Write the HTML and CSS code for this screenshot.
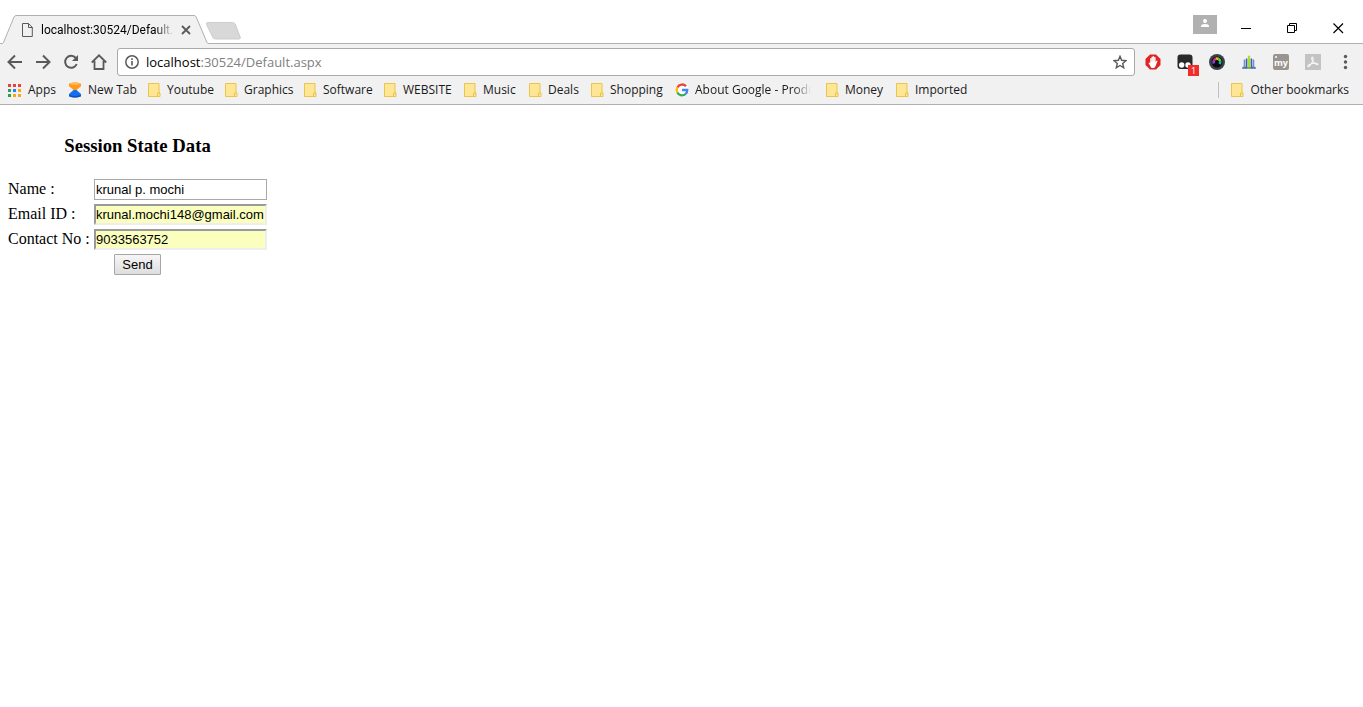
FILE: index.html
```html
<!DOCTYPE html>
<html lang="en">
<head>
<meta charset="utf-8">
<title>localhost:30524/Default.aspx</title>
<link rel="stylesheet" href="styles.css">
</head>
<body>
<svg class="defs" width="0" height="0" aria-hidden="true">
  <symbol id="folder" viewBox="0 0 13 14"><path d="M.5 .5h10.500v9.500h1v3.500H.5z" fill="#ffe694" stroke="#e9c54b"/><path d="M9.500 13.500v-3.500h2.500" fill="none" stroke="#e9c54b"/></symbol>
</svg>
<header class="browser">
  <div class="tabstrip">
    <div class="tab">
      <svg class="tab-shape" width="210" height="29" viewBox="0 0 210 29"><path d="M0 28.500h2q1 0 1.500-1L14 2Q15 .5 16 .5h178q1.500 0 2.200 1.500L207 27.500q.5 1 1.500 1h1.500V29H0z" fill="#f1f1f1"/><path d="M0 28.500h2q1 0 1.500-1L14 2Q15 .5 16 .5h178q1.500 0 2.200 1.500L207 27.500q.5 1 1.500 1h1.500" fill="none" stroke="#b0b0b0"/></svg>
      <svg class="page-icon" width="11" height="14" viewBox="0 0 11 14" fill="none" stroke="#5a5a5a"><path d="M.5 .5h6l3.800 3.800v9.200H.5zM6.500 .5v4h4"/></svg>
      <span class="tab-title">localhost:30524/Default.aspx</span>
      <button class="plain tab-close" aria-label="Close tab"><svg width="10" height="10" viewBox="0 0 10 10" stroke="#5a5a5a" stroke-width="1.800"><path d="M1 1l8 8M9 1L1 9"/></svg></button>
    </div>
    <button class="plain new-tab" aria-label="New tab"><svg width="36" height="18" viewBox="0 0 36 18"><path d="M1.500 .5h25q2 0 2.700 1.500l5 13q.7 2-1.200 2H9.500q-2 0-2.700-1.500L.5 2.500Q0 .5 1.500 .5z" fill="#d8d8d8" stroke="#cdcdcd"/></svg></button>
    <div class="window-controls">
      <button class="plain profile" aria-label="Profile"><svg width="24" height="19" viewBox="0 0 24 19"><path d="M0 0h24v19H0z" fill="#b1b1b1"/><circle cx="12" cy="6" r="2" fill="#fff"/><path d="M8 12v-1q0-2 4-2t4 2v1z" fill="#fff"/></svg></button>
      <button class="plain control" aria-label="Minimize"><svg width="11" height="11" viewBox="0 0 11 11"><path d="M0 5h10v1H0z"/></svg></button>
      <button class="plain control" aria-label="Restore"><svg width="11" height="11" viewBox="0 0 11 11" fill="none" stroke="#000"><path d="M.5 2.500h7v7h-7zM2.500 2V.5h7v7H8"/></svg></button>
      <button class="plain control" aria-label="Close"><svg width="11" height="11" viewBox="0 0 11 11" stroke="#000" stroke-width="1.200"><path d="M.5 .5l9.500 9.500M10 .5L.5 10"/></svg></button>
    </div>
  </div>
  <div class="toolbar">
    <nav class="nav-buttons">
      <button class="plain" aria-label="Back"><svg width="16" height="16" viewBox="0 0 16 16" fill="none" stroke="#5a5a5a" stroke-width="2"><path d="M15 8H2M8 1.500L1.500 8 8 14.500"/></svg></button>
      <button class="plain" aria-label="Forward"><svg width="16" height="16" viewBox="0 0 16 16" fill="none" stroke="#5a5a5a" stroke-width="2"><path d="M1 8h13M8 1.500L14.500 8 8 14.500"/></svg></button>
      <button class="plain" aria-label="Reload"><svg width="16" height="16" viewBox="0 0 16 16"><path d="M12.800 4A6 6 0 1 0 13.700 10" fill="none" stroke="#5a5a5a" stroke-width="2"/><path d="M15 1v6H9z" fill="#5a5a5a"/></svg></button>
      <button class="plain" aria-label="Home"><svg width="16" height="16" viewBox="0 0 16 16" fill="none" stroke="#5a5a5a" stroke-width="1.800"><path d="M.8 8.500L8 1.300l7.200 7.200M3.500 7v8h9V7"/></svg></button>
    </nav>
    <div class="omnibox">
      <svg width="14" height="14" viewBox="0 0 14 14"><circle cx="7" cy="7" r="6.200" fill="none" stroke="#5a5a5a" stroke-width="1.500"/><path d="M6.200 6h1.600v4.500H6.200zM6.200 3.300h1.600v1.600H6.200z" fill="#5a5a5a"/></svg>
      <span class="url"><span class="host">localhost</span>:30524/Default.aspx</span>
      <button class="plain" aria-label="Bookmark this page"><svg width="14" height="14" viewBox="0 0 14 14" fill="none" stroke="#5a5a5a" stroke-width="1.400"><path d="M7 1.300l1.600 4 4.400.4-3.300 2.800 1 4.300L7 10.500l-3.700 2.300 1-4.300L1 5.700l4.400-.4z"/></svg></button>
    </div>
    <div class="extensions">
      <button class="plain" aria-label="Ad blocker"><svg width="16" height="16" viewBox="0 0 16 16"><path d="M5 .5h6L15.500 5v6L11 15.500H5L.5 11V5z" fill="#e02424"/><path d="M5.500 12.500L3.500 9q.5-1 1.700 0V4.500q.6-1 1.300 0V3q.6-1 1.300 0v-.5q.8-1 1.400 0V3.500q.8-1 1.400 0V8l1-1.500q1-.3.8.7l-1.900 5q-.6 1.800-2 1.800H7q-1 0-1.500-1.500z" fill="#fff"/><path d="M6.500 4v3.500M7.800 3.500v4M9.200 4v3.500" stroke="#eaa" stroke-width=".4"/></svg></button>
      <button class="plain badged" aria-label="Scripts, 1 active"><svg width="16" height="16" viewBox="0 0 16 16"><rect x=".5" y=".5" width="15" height="14.500" rx="3" fill="#292929"/><circle cx="4.700" cy="11" r="2.700" fill="#fff"/><circle cx="11" cy="11" r="2.700" fill="#fff"/></svg><span class="badge">1</span></button>
      <button class="plain" aria-label="Camera"><svg width="16" height="16" viewBox="0 0 16 16"><circle cx="8" cy="8" r="8" fill="#3d4147"/><circle cx="8" cy="8" r="5.500" fill="#0c0c10"/><g fill="none" stroke-width="2.600"><path d="M5 9.500A3.300 3.300 0 0 1 5.300 6" stroke="#8a3be0"/><path d="M5.300 6A3.300 3.300 0 0 1 7 4.800" stroke="#e8385a"/><path d="M7 4.800a3.300 3.300 0 0 1 2.500.2" stroke="#f0b92e"/><path d="M9.500 5a3.300 3.300 0 0 1 1.800 2.500" stroke="#55d63a"/><path d="M11.300 7.500A3.300 3.300 0 0 1 10.500 10" stroke="#20b9a4"/></g></svg></button>
      <button class="plain" aria-label="Traffic chart"><svg width="16" height="16" viewBox="0 0 16 16"><path d="M1 14.500l1.700-2.500V6q.8-1.500 1.600 0v8.500zM15 14.500l-1.700-2.500V6q-.8-1.500-1.600 0v8.500z" fill="#6f8fd8"/><path d="M3.800 14.500l1-2.500V5q.8-1.500 1.600 0v9.500zM12.200 14.500l-1-2.500V5q-.8-1.500-1.600 0v9.500z" fill="#3f5cb0"/><path d="M5.500 14.500L6.800 11V2.500q1.200-2 2.400 0V11l1.300 3.500z" fill="#a5e02c"/><path d="M1 14h14" stroke="#46609a"/></svg></button>
      <button class="plain" aria-label="My"><svg width="16" height="16" viewBox="0 0 16 16"><rect width="16" height="16" rx="2" fill="#99948f"/><circle cx="3" cy="3" r="1" fill="#fff"/><text x="8" y="12" class="my-mark" text-anchor="middle">my</text></svg></button>
      <button class="plain" aria-label="PDF"><svg width="16" height="16" viewBox="0 0 16 16"><path d="M0 0h16v16H0z" fill="#c3c3c3"/><path d="M3 12.500c-1-1 2-2.500 4.500-3s5.500-.5 5.500.7-3 0-5-2.700S6.500 3 7.500 3s1 2.500-.5 5.500-3.300 4.500-4 4z" fill="none" stroke="#f5f5f5" stroke-width="1.100"/></svg></button>
      <button class="plain" aria-label="Menu"><svg width="16" height="16" viewBox="0 0 16 16" fill="#5a5a5a"><circle cx="8.500" cy="2.500" r="1.700"/><circle cx="8.500" cy="8" r="1.700"/><circle cx="8.500" cy="13.500" r="1.700"/></svg></button>
    </div>
  </div>
  <nav class="bookmarks" aria-label="Bookmarks">
    <div class="bookmark-list">
      <a href="#"><svg width="14" height="13" viewBox="0 0 14 13"><path d="M0 0h3v3H0zM5 0h3v3H5zM10 0h3v3h-3z" fill="#ea4335"/><path d="M0 5h3v3H0zM0 10h3v3H0z" fill="#2b9f57"/><path d="M5 5h3v3H5z" fill="#2a80f0"/><path d="M10 5h3v3h-3zM5 10h3v3H5zM10 10h3v3h-3z" fill="#f8ab10"/></svg><span>Apps</span></a>
      <a href="#"><svg width="14" height="16" viewBox="0 0 14 16"><path d="M1 1.800Q7-1 13 1.800v2.400L8.500 8h-3L1 4.200z" fill="#ff9a1c"/><path d="M1 1.800Q7-1 13 1.800 7 4.500 1 1.800z" fill="#ffb95a"/><path d="M5.500 8h3L13 12v2.200Q7 17 1 14.200V12z" fill="#1570ee"/><path d="M1 13q6 2 12 0v1.200Q7 17 1 14.200z" fill="#0a4fc0"/></svg><span>New Tab</span></a>
      <a href="#"><svg width="13" height="14"><use href="#folder"/></svg><span>Youtube</span></a>
      <a href="#"><svg width="13" height="14"><use href="#folder"/></svg><span>Graphics</span></a>
      <a href="#"><svg width="13" height="14"><use href="#folder"/></svg><span>Software</span></a>
      <a href="#"><svg width="13" height="14"><use href="#folder"/></svg><span>WEBSITE</span></a>
      <a href="#"><svg width="13" height="14"><use href="#folder"/></svg><span>Music</span></a>
      <a href="#"><svg width="13" height="14"><use href="#folder"/></svg><span>Deals</span></a>
      <a href="#"><svg width="13" height="14"><use href="#folder"/></svg><span>Shopping</span></a>
      <a href="#"><svg width="14" height="14" viewBox="0 0 14 14"><circle cx="7" cy="7" r="7" fill="#fff"/><g fill="none" stroke-width="2.300"><path d="M11 3.200A5.300 5.300 0 0 0 2.400 4.400" stroke="#ea4335"/><path d="M2.400 4.400a5.300 5.300 0 0 0 0 5.200" stroke="#fbbc05"/><path d="M2.400 9.600a5.300 5.300 0 0 0 8.200 1.400" stroke="#34a853"/><path d="M10.600 11A5.300 5.300 0 0 0 12.300 7H7" stroke="#4285f4"/></g></svg><span class="fade">About Google - Products</span></a>
      <a href="#"><svg width="13" height="14"><use href="#folder"/></svg><span>Money</span></a>
      <a href="#"><svg width="13" height="14"><use href="#folder"/></svg><span>Imported</span></a>
    </div>
    <a class="other" href="#"><svg width="13" height="14"><use href="#folder"/></svg><span>Other bookmarks</span></a>
  </nav>
</header>
<main class="page">
  <form class="session-form">
    <h3>Session State Data</h3>
    <label for="name">Name :</label><input id="name" type="text" value="krunal p. mochi">
    <label for="email">Email ID :</label><input class="filled" id="email" type="text" value="krunal.mochi148@gmail.com">
    <label for="contact">Contact No :</label><input class="filled" id="contact" type="text" value="9033563752">
    <button class="send" type="button">Send</button>
  </form>
</main>
</body>
</html>
```
FILE: styles.css
```css
* { box-sizing: border-box; }
body { margin: 0; background: #fff; color: #000; font-family: "Liberation Serif", serif; }
svg { display: block; flex: none; }
.defs { position: absolute; }
.plain { display: flex; padding: 0; border: 0; background: none; }

.browser { background: #f1f1f1; border-bottom: 1px solid #b0b0b0; font: 12px/16px "Open Sans", "Noto Sans", sans-serif; }

.tabstrip { display: flex; height: 44px; padding-top: 15px; background: #fff; border-bottom: 1px solid #b0b0b0; }
.tab { position: relative; display: flex; align-items: center; width: 206px; height: 29px; padding: 0 15px 0 22px; }
.tab-shape { position: absolute; left: 0; top: 0; }
.page-icon, .tab-title, .tab-close { position: relative; }
.tab-title { flex: 1; margin: 0 7px 0 8px; overflow: hidden; white-space: nowrap; font-family: Roboto, sans-serif; mask-image: linear-gradient(to right, #000 86%, transparent); }
.new-tab { margin-top: 7px; height: 18px; }
.window-controls { display: flex; margin-left: auto; padding-right: 2px; }
.profile { height: 19px; margin-right: 6px; }
.control { width: 46px; height: 26px; align-items: center; justify-content: center; }

.toolbar { display: flex; align-items: center; padding: 4px 10px 0 7px; }
.nav-buttons { display: flex; gap: 12px; margin-right: 10px; }
.omnibox { display: flex; flex: 1; align-items: center; gap: 7px; height: 28px; padding: 0 7px; border: 1px solid #a9a9a9; border-radius: 3px; background: #fff; }
.url { flex: 1; font-size: 13px; color: #808080; }
.host { color: #000; }
.extensions { display: flex; gap: 16px; margin-left: 10px; }
.badged { position: relative; }
.badge { position: absolute; left: 11px; top: 11px; width: 11px; height: 11px; background: #f02d2d; color: #fff; font: 9px/11px "Open Sans", sans-serif; text-align: center; }
.my-mark { fill: #fff; font: bold 9px "Open Sans", sans-serif; }

.bookmarks { display: flex; justify-content: space-between; height: 28px; padding: 0 14px 0 8px; }
.bookmarks a { display: flex; align-items: center; gap: 6px; color: #1a1a1a; text-decoration: none; white-space: nowrap; }
.bookmark-list { display: grid; grid-template-columns: 60px 80px 77px 79px 80px 80px 65px 62px 84px 151px 70px 70px; }
.fade { width: 116px; overflow: hidden; mask-image: linear-gradient(to right, #000 85%, transparent); }
.other { align-self: center; padding-left: 12px; border-left: 1px solid #c0c0c0; }

.page { padding: 0 8px; }
.session-form { display: grid; grid-template-columns: 82px 173px; column-gap: 4px; row-gap: 4px; width: max-content; padding-top: 11px; align-items: center; }
.session-form h3 { grid-column: 1 / -1; justify-self: center; margin-bottom: 18px; }
.session-form label { font-size: 16px; line-height: 20px; white-space: nowrap; }
.session-form input { width: 100%; height: 21px; padding: 1px; border: 1px solid #a9a9a9; background: #fff; color: #000; font: 13px "Liberation Sans", sans-serif; }
.session-form .filled { border: 2px solid; border-color: #9a9a9a #eee #eee #9a9a9a; padding: 0; background: #faffbd; }
.send { grid-column: 1 / -1; justify-self: center; height: 21px; padding: 0 7px; border: 1px solid #a6a6a6; border-radius: 1px; background: linear-gradient(#f6f6f6, #dedede); color: #000; font: 13px "Liberation Sans", sans-serif; }
```
